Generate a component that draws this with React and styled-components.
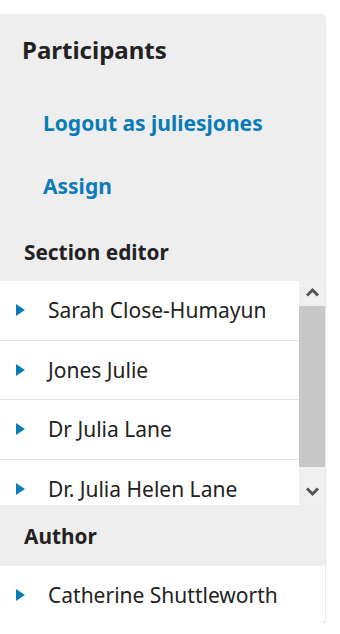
import React from 'react';
import styled, { createGlobalStyle } from 'styled-components';

const GlobalStyle = createGlobalStyle`
  html, body {
    margin: 0;
    padding: 0;
    background: #fff;
  }
  body {
    font-family: "Noto Sans", "Open Sans", sans-serif;
    color: #222;
  }
`;

const Panel = styled.div`
  margin-top: 14px;
  width: 325px;
  background: #eee;
  border-radius: 0 4px 4px 0;
  box-shadow: 0 1px 2px rgba(0, 0, 0, 0.3);
  overflow: hidden;
`;

const Title = styled.h2`
  margin: 0;
  padding: 22px 22px 0;
  font-size: 24px;
  line-height: 28px;
  font-weight: 700;
  color: #222;
`;

const Actions = styled.ul`
  list-style: none;
  margin: 0;
  padding: 45px 0 0 43px;
  display: flex;
  flex-direction: column;
  gap: 35px;
`;

const ActionLink = styled.a`
  display: block;
  font-size: 21px;
  line-height: 28px;
  font-weight: 700;
  color: #0a7cb8;
  text-decoration: none;
`;

const GroupHeader = styled.h3`
  margin: 0;
  padding: ${p => p.$top}px 24px ${p => p.$bottom}px;
  font-size: 20.8px;
  line-height: 28px;
  font-weight: 700;
  color: #222;
`;

const ScrollArea = styled.div`
  display: flex;
  height: 224px;
`;

const List = styled.ul`
  flex: 1;
  list-style: none;
  margin: 0;
  padding: 0;
  overflow: hidden;
  background: #fff;
`;

const Row = styled.li`
  display: flex;
  align-items: center;
  height: ${p => p.$height}px;
  box-sizing: border-box;
  padding: 0 0 0 16px;
  border-bottom: ${p => (p.$last ? 'none' : '1px solid #e2e2e2')};
  background: #fff;
  font-size: 21px;
  color: #222;
`;

const Toggle = styled.span`
  width: 0;
  height: 0;
  border-top: 6px solid transparent;
  border-bottom: 6px solid transparent;
  border-left: 9px solid #0a7cb8;
  margin-right: 23px;
  flex-shrink: 0;
`;

const Scrollbar = styled.div`
  width: 26px;
  display: flex;
  flex-direction: column;
  background: #f0f0f0;
`;

const ScrollButton = styled.div`
  height: ${p => p.$height}px;
  box-sizing: border-box;
  padding-bottom: ${p => p.$shift || 0}px;
  display: flex;
  align-items: center;
  justify-content: center;
`;

const Thumb = styled.div`
  height: 161px;
  background: #c8c8c8;
`;

const Track = styled.div`
  flex: 1;
`;

const Chevron = ({ up }) => (
  <svg width="15" height="10" viewBox="0 0 15 10">
    <path
      d={up ? 'M2 8.5 L7.5 3 L13 8.5' : 'M2 1.5 L7.5 7 L13 1.5'}
      fill="none"
      stroke="#555"
      strokeWidth="3"
    />
  </svg>
);

const editors = ['Sarah Close-Humayun', 'Jones Julie', 'Dr Julia Lane', 'Dr. Julia Helen Lane'];

export default function App() {
  return (
    <>
      <GlobalStyle />
      <Panel>
        <Title>Participants</Title>
        <Actions>
          <li><ActionLink href="#">Logout as juliesjones</ActionLink></li>
          <li><ActionLink href="#">Assign</ActionLink></li>
        </Actions>
        <GroupHeader $top={38} $bottom={15}>Section editor</GroupHeader>
        <ScrollArea>
          <List>
            {editors.map(name => (
              <Row key={name} $height={59.5}>
                <Toggle />
                {name}
              </Row>
            ))}
          </List>
          <Scrollbar>
            <ScrollButton $height={25} $shift={3}><Chevron up /></ScrollButton>
            <Thumb />
            <Track />
            <ScrollButton $height={26}><Chevron /></ScrollButton>
          </Scrollbar>
        </ScrollArea>
        <GroupHeader $top={17} $bottom={16}>Author</GroupHeader>
        <List>
          <Row $height={57} $last>
            <Toggle />
            Catherine Shuttleworth
          </Row>
        </List>
      </Panel>
    </>
  );
}
